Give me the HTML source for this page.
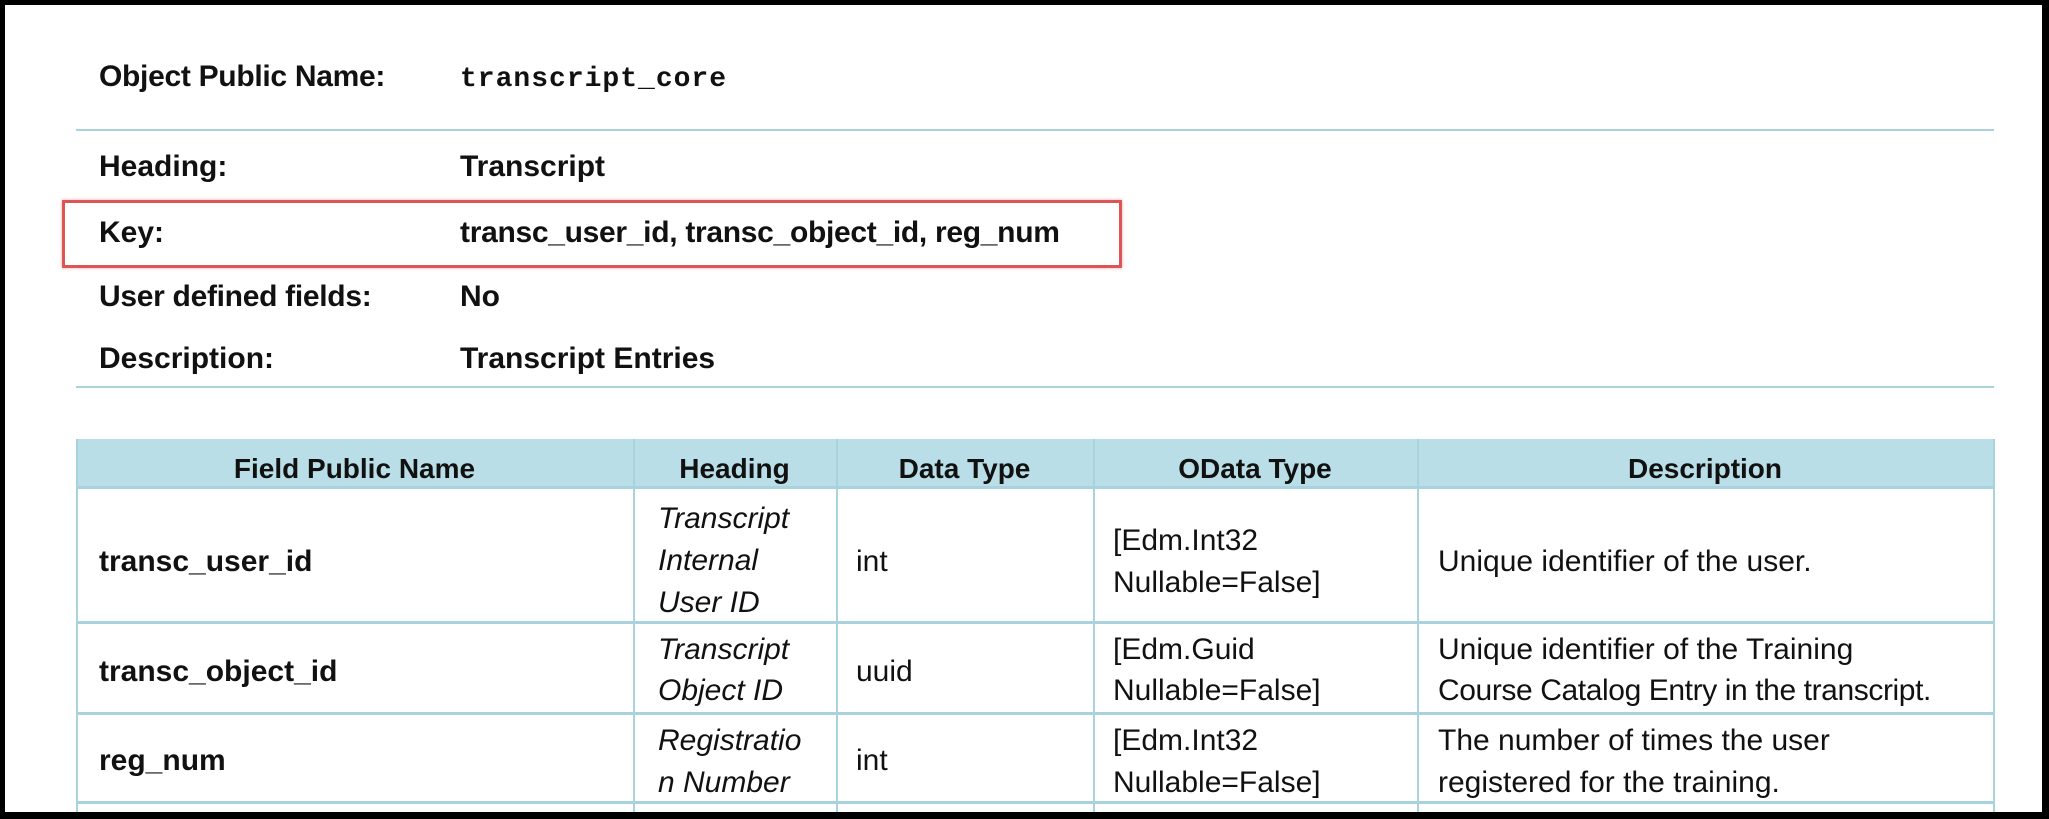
<!DOCTYPE html>
<html><head><style>
*{margin:0;padding:0;box-sizing:border-box}
body{width:2049px;height:819px;background:#000;position:relative;overflow:hidden;font-family:"Liberation Sans",sans-serif;color:#111}
#pg{position:absolute;left:5px;top:5px;width:2037px;height:807px;background:#fff;overflow:hidden}
.t{position:absolute;white-space:nowrap;font-size:30px;line-height:34px;transform:translateY(-50%)}
.b{font-weight:bold}
.hl{position:absolute;height:2px;background:#a8d2dc}
.vl{position:absolute;width:2px;background:#a8d2dc}
.i{font-style:italic}
.h{font-size:28px}
</style></head><body><div id="pg">
<div class="t b" style="left:94px;top:72px;letter-spacing:-0.3px">Object Public Name:</div>
<div class="t b" style="left:455px;top:75px;font-family:'Liberation Mono',monospace;font-size:28px;letter-spacing:1px">transcript_core</div>
<div class="hl" style="left:71px;top:124px;width:1918px"></div>
<div class="t b" style="left:94px;top:162px">Heading:</div>
<div class="t b" style="left:455px;top:162px">Transcript</div>
<div style="position:absolute;left:57px;top:195px;width:1060px;height:68px;border:3px solid #dd5555;box-shadow:0 0 3px rgba(220,80,80,.5)"></div>
<div class="t b" style="left:94px;top:228px">Key:</div>
<div class="t b" style="left:455px;top:228px;letter-spacing:-0.3px">transc_user_id, transc_object_id, reg_num</div>
<div class="t b" style="left:94px;top:292px;letter-spacing:-0.3px">User defined fields:</div>
<div class="t b" style="left:455px;top:292px">No</div>
<div class="t b" style="left:94px;top:354px">Description:</div>
<div class="t b" style="left:455px;top:354px">Transcript Entries</div>
<div class="hl" style="left:71px;top:381px;width:1918px"></div>

<div style="position:absolute;left:71px;top:434px;width:1918px;height:48px;background:#b9dee7"></div>
<div class="hl" style="left:71px;top:481px;width:1918px;height:3px"></div>
<div class="hl" style="left:71px;top:616px;width:1918px;height:3px"></div>
<div class="hl" style="left:71px;top:707px;width:1918px;height:3px"></div>
<div class="hl" style="left:71px;top:796px;width:1918px;height:3px"></div>
<div class="vl" style="left:71px;top:434px;height:380px"></div>
<div class="vl" style="left:628px;top:434px;height:380px"></div>
<div class="vl" style="left:831px;top:434px;height:380px"></div>
<div class="vl" style="left:1088px;top:434px;height:380px"></div>
<div class="vl" style="left:1412px;top:434px;height:380px"></div>
<div class="vl" style="left:1988px;top:434px;height:380px"></div>

<div class="t b h" style="left:71px;width:557px;text-align:center;top:464px">Field Public Name</div>
<div class="t b h" style="left:628px;width:203px;text-align:center;top:464px">Heading</div>
<div class="t b h" style="left:831px;width:257px;text-align:center;top:464px">Data Type</div>
<div class="t b h" style="left:1088px;width:324px;text-align:center;top:464px">OData Type</div>
<div class="t b h" style="left:1412px;width:576px;text-align:center;top:464px">Description</div>

<div class="t b" style="left:94px;top:557px">transc_user_id</div>
<div class="t i" style="left:653px;top:514px">Transcript</div>
<div class="t i" style="left:653px;top:556px">Internal</div>
<div class="t i" style="left:653px;top:598px">User ID</div>
<div class="t" style="left:851px;top:557px">int</div>
<div class="t" style="left:1108px;top:536px">[Edm.Int32</div>
<div class="t" style="left:1108px;top:578px">Nullable=False]</div>
<div class="t" style="left:1433px;top:557px">Unique identifier of the user.</div>

<div class="t b" style="left:94px;top:667px">transc_object_id</div>
<div class="t i" style="left:653px;top:645px">Transcript</div>
<div class="t i" style="left:653px;top:686px">Object ID</div>
<div class="t" style="left:851px;top:667px">uuid</div>
<div class="t" style="left:1108px;top:645px">[Edm.Guid</div>
<div class="t" style="left:1108px;top:686px">Nullable=False]</div>
<div class="t" style="left:1433px;top:645px">Unique identifier of the Training</div>
<div class="t" style="left:1433px;top:686px;letter-spacing:-0.4px">Course Catalog Entry in the transcript.</div>

<div class="t b" style="left:94px;top:756px">reg_num</div>
<div class="t i" style="left:653px;top:736px">Registratio</div>
<div class="t i" style="left:653px;top:778px">n Number</div>
<div class="t" style="left:851px;top:756px">int</div>
<div class="t" style="left:1108px;top:736px">[Edm.Int32</div>
<div class="t" style="left:1108px;top:778px">Nullable=False]</div>
<div class="t" style="left:1433px;top:736px">The number of times the user</div>
<div class="t" style="left:1433px;top:778px">registered for the training.</div>
</div></body></html>
